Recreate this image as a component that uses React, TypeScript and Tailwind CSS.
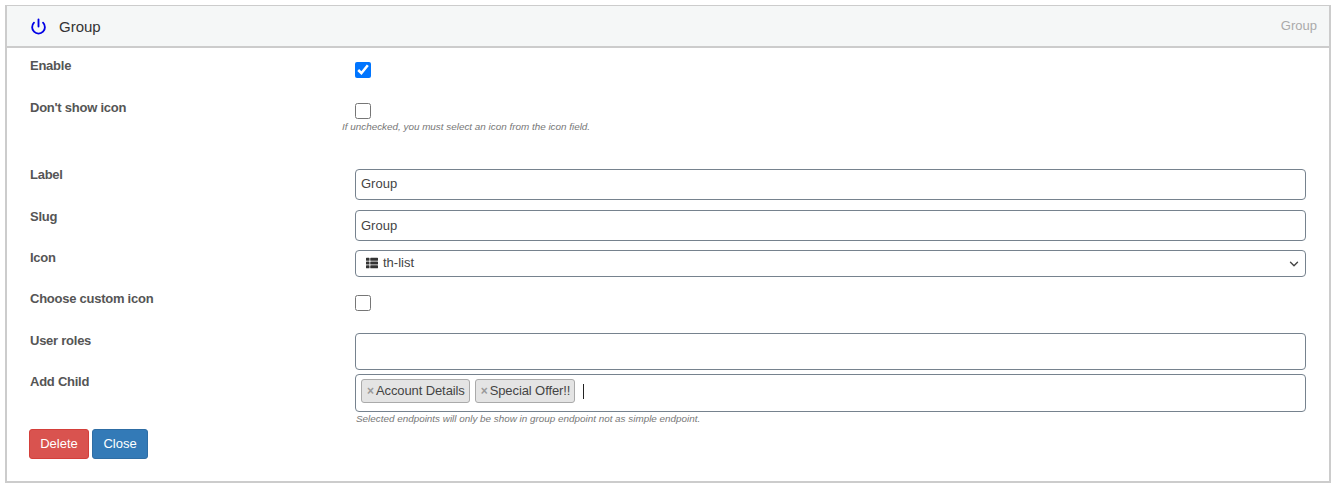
import { ChevronDown, Power } from 'lucide-react';
import { FaThList } from 'react-icons/fa';
import type { ReactNode } from 'react';

const boxClass = 'w-full rounded-[4px] border border-[#76828e] bg-white';

function Row({ label, rowClass, ctrlClass, children }: { label: string; rowClass: string; ctrlClass: string; children: ReactNode }) {
  return (
    <div className={`flex items-start ${rowClass}`}>
      <label className="mt-px w-[348px] shrink-0 pl-[23px] text-[13px] font-bold leading-5 tracking-[-0.25px] text-[#555]">{label}</label>
      <div className={`w-[951px] ${ctrlClass}`}>{children}</div>
    </div>
  );
}

function Chip({ text }: { text: string }) {
  return (
    <span className="flex h-6 items-center rounded-[3px] border border-[#aaa] bg-[#e4e4e4] pl-[5px] pr-[4px] text-[13px] tracking-[-0.1px] text-[#444]">
      <span className="mr-[2px] text-[12px] font-bold leading-none text-[#999]">×</span>
      {text}
    </span>
  );
}

export default function App() {
  return (
    <div className="h-[490px] bg-white pl-[5px] pt-[5px] font-['Liberation_Sans',Arial,sans-serif]">
      <div className="h-[478px] w-[1326px] border-2 border-t border-[#ccc] border-r-[#ccc]">
        {/* Header */}
        <div className="flex h-[42px] items-center justify-between border-b-2 border-[#ccc] bg-[#f5f7f7] pl-[23px] pr-[12px]">
          <div className="mt-[2px] flex items-center">
            <Power className="-mt-[2px] h-[17px] w-[17px] text-[#0000e6]" strokeWidth={2.6} />
            <span className="ml-[12px] mt-[1px] text-[15px] text-[#333]">Group</span>
          </div>
          <span className="-mt-[1px] text-[13px] text-[#aaa]">Group</span>
        </div>

        <Row label="Enable" rowClass="h-[42px] pt-[7px]" ctrlClass="pt-[7px]">
          <input type="checkbox" defaultChecked className="block h-4 w-4 accent-[#0075ff]" />
        </Row>

        <Row label="Don't show icon" rowClass="h-[74px] pt-[7px]" ctrlClass="pt-[6px]">
          <input type="checkbox" className="block h-4 w-4" />
          <p className="-ml-[13px] mt-[2px] text-[9.9px] italic leading-3 text-[#777]">If unchecked, you must select an icon from the icon field.</p>
        </Row>

        <Row label="Label" rowClass="h-[42px]" ctrlClass="pt-[5px]">
          <div className={`${boxClass} flex h-[31px] items-center px-[5px] pb-[2px] text-[13px] text-[#444]`}>Group</div>
        </Row>

        <Row label="Slug" rowClass="h-[41px]" ctrlClass="pt-[4px]">
          <div className={`${boxClass} flex h-[31px] items-center px-[5px] text-[13px] text-[#444]`}>Group</div>
        </Row>

        <Row label="Icon" rowClass="h-[41px]" ctrlClass="pt-[3px]">
          <div className={`${boxClass} flex h-[27px] items-center justify-between pl-[9px] pr-[4px] text-[13px] text-[#444]`}>
            <span className="flex items-center pb-[2px]">
              <FaThList className="mr-[4px] h-[12px] w-[14px] text-[#333]" />
              th-list
            </span>
            <ChevronDown className="h-[14px] w-[14px] text-[#444]" strokeWidth={2.4} />
          </div>
        </Row>

        <Row label="Choose custom icon" rowClass="h-[42px]" ctrlClass="pt-[7px]">
          <input type="checkbox" className="block h-4 w-4" />
        </Row>

        <Row label="User roles" rowClass="h-[41px]" ctrlClass="pt-[3px]">
          <div className={`${boxClass} h-[37px]`} />
        </Row>

        <Row label="Add Child" rowClass="h-[58px]" ctrlClass="pt-[3px]">
          <div className={`${boxClass} flex h-[38px] items-start gap-[5px] pl-[5px] pt-[4px]`}>
            <Chip text="Account Details" />
            <Chip text="Special Offer!!" />
            <span className="ml-[3px] mt-[5px] h-[15px] w-px bg-[#222]" />
          </div>
          <p className="ml-px mt-[1px] text-[9.9px] italic leading-3 text-[#777]">Selected endpoints will only be show in group endpoint not as simple endpoint.</p>
        </Row>

        <div className="flex gap-[3px] pl-[22px]">
          <button className="h-[30px] w-[60px] rounded-[3px] border border-[#d43f3a] bg-[#d9534f] text-[13px] text-white">Delete</button>
          <button className="h-[30px] w-[56px] rounded-[3px] border border-[#2e6da4] bg-[#337ab7] text-[13px] text-white">Close</button>
        </div>
      </div>
    </div>
  );
}
